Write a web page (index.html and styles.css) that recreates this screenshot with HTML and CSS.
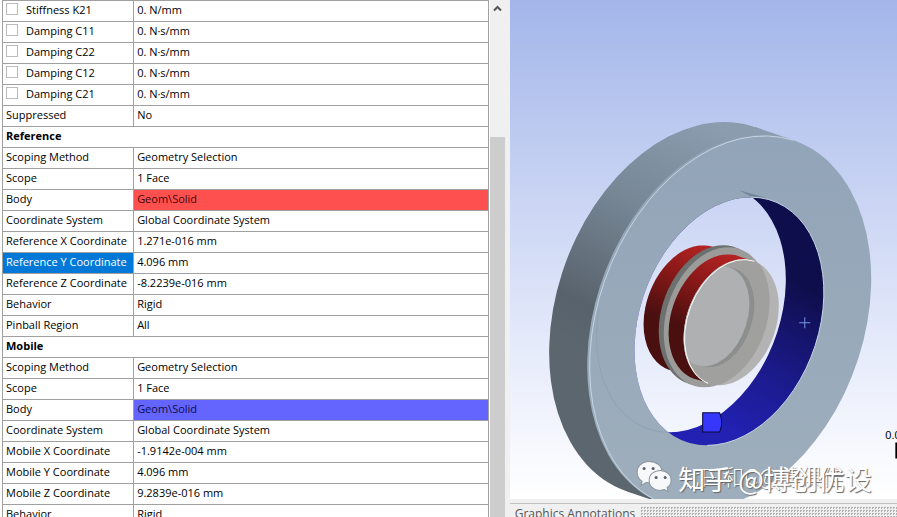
FILE: index.html
```html
<!DOCTYPE html>
<html lang="en">
<head>
<meta charset="UTF-8">
<meta name="viewport" content="width=device-width, initial-scale=1.0">
<title>Bearing details</title>
<link rel="stylesheet" href="styles.css">
</head>
<body>
  <div class="app">
    <section class="details">
      <table class="props">
        <colgroup>
          <col class="name-col">
          <col>
        </colgroup>
        <tbody>
          <tr><td><input type="checkbox" id="k21"><label for="k21">Stiffness K21</label></td><td>0. N/mm</td></tr>
          <tr><td><input type="checkbox" id="c11"><label for="c11">Damping C11</label></td><td>0. N·s/mm</td></tr>
          <tr><td><input type="checkbox" id="c22"><label for="c22">Damping C22</label></td><td>0. N·s/mm</td></tr>
          <tr><td><input type="checkbox" id="c12"><label for="c12">Damping C12</label></td><td>0. N·s/mm</td></tr>
          <tr><td><input type="checkbox" id="c21"><label for="c21">Damping C21</label></td><td>0. N·s/mm</td></tr>
          <tr><td>Suppressed</td><td>No</td></tr>
        </tbody>
        <tbody>
          <tr><th colspan="2">Reference</th></tr>
          <tr><td>Scoping Method</td><td>Geometry Selection</td></tr>
          <tr><td>Scope</td><td>1 Face</td></tr>
          <tr><td>Body</td><td class="body-red">Geom\Solid</td></tr>
          <tr><td>Coordinate System</td><td>Global Coordinate System</td></tr>
          <tr><td>Reference X Coordinate</td><td>1.271e-016 mm</td></tr>
          <tr><td class="selected">Reference Y Coordinate</td><td>4.096 mm</td></tr>
          <tr><td>Reference Z Coordinate</td><td>-8.2239e-016 mm</td></tr>
          <tr><td>Behavior</td><td>Rigid</td></tr>
          <tr><td>Pinball Region</td><td>All</td></tr>
        </tbody>
        <tbody>
          <tr><th colspan="2">Mobile</th></tr>
          <tr><td>Scoping Method</td><td>Geometry Selection</td></tr>
          <tr><td>Scope</td><td>1 Face</td></tr>
          <tr><td>Body</td><td class="body-blue">Geom\Solid</td></tr>
          <tr><td>Coordinate System</td><td>Global Coordinate System</td></tr>
          <tr><td>Mobile X Coordinate</td><td>-1.9142e-004 mm</td></tr>
          <tr><td>Mobile Y Coordinate</td><td>4.096 mm</td></tr>
          <tr><td>Mobile Z Coordinate</td><td>9.2839e-016 mm</td></tr>
          <tr><td>Behavior</td><td>Rigid</td></tr>
        </tbody>
      </table>
      <div class="scrollbar">
        <button class="scroll-up" aria-label="Scroll up">
          <svg width="9" height="7" viewBox="0 0 9 7"><path d="M1 5.5 4.500 2 8 5.500" fill="none" stroke="#555" stroke-width="2"/></svg>
        </button>
        <div class="thumb"></div>
      </div>
    </section>

    <section class="graphics">
      <div class="stage">
        <svg class="model" viewBox="510 0 387 499" preserveAspectRatio="xMinYMin slice">
          <defs>
            <linearGradient id="side" gradientUnits="userSpaceOnUse" x1="700" y1="120" x2="590" y2="350">
              <stop offset="0" stop-color="#8a9cae"/>
              <stop offset="0.4" stop-color="#778796"/>
              <stop offset="0.85" stop-color="#58626c"/>
              <stop offset="1" stop-color="#5c666f"/>
            </linearGradient>
            <linearGradient id="face" gradientUnits="userSpaceOnUse" x1="0" y1="135" x2="0" y2="499">
              <stop offset="0" stop-color="#92a4b8"/>
              <stop offset="1" stop-color="#9eaebc"/>
            </linearGradient>
            <linearGradient id="bore" gradientUnits="userSpaceOnUse" x1="810" y1="290" x2="730" y2="430">
              <stop offset="0" stop-color="#0f0e4c"/>
              <stop offset="0.55" stop-color="#1b1a8a"/>
              <stop offset="1" stop-color="#2221b2"/>
            </linearGradient>
            <linearGradient id="red" gradientUnits="userSpaceOnUse" x1="710" y1="248" x2="680" y2="325">
              <stop offset="0" stop-color="#b42323"/>
              <stop offset="0.4" stop-color="#8c1919"/>
              <stop offset="1" stop-color="#4a0f0f"/>
            </linearGradient>
            <clipPath id="backDisc"><circle r="1" transform="matrix(138 0 -33 187 691 309)"/></clipPath>
            <clipPath id="frontDisc"><circle r="1" transform="matrix(138 0 -33 187 729 322)"/></clipPath>
            <clipPath id="frontHole"><circle r="1" transform="matrix(92 0 -22 124 729 321)"/></clipPath>
            <clipPath id="backHole"><circle r="1" transform="matrix(92 0 -22 124 691 308)"/></clipPath>
            <clipPath id="shaftFace"><circle r="1" transform="matrix(46 0 -12 63 731 322)"/></clipPath>
            <clipPath id="rearRed">
              <circle r="1" transform="matrix(46 0 -12 63 691 308)"/>
              <path d="M713 247 733 254 689 376 669 369z"/>
            </clipPath>
            <clipPath id="frontRed">
              <circle r="1" transform="matrix(46 0 -12 63 716 317)"/>
              <path d="M738 256 754 261 709 383 694 378z"/>
            </clipPath>
            <mask id="through" maskUnits="userSpaceOnUse" x="510" y="0" width="387" height="520">
              <rect x="510" width="387" height="520" fill="#fff"/>
              <g clip-path="url(#frontHole)"><rect x="510" width="387" height="520" fill="#000" clip-path="url(#backHole)"/></g>
            </mask>
          </defs>

          <!-- housing ring -->
          <g mask="url(#through)">
            <path d="M793 140 665 504 627 491 755 127z" fill="url(#side)"/>
            <rect x="510" width="387" height="520" fill="url(#side)" clip-path="url(#backDisc)"/>
            <rect x="510" width="387" height="520" fill="url(#face)" clip-path="url(#frontDisc)"/>
            <path d="M.23 -.973A1 1 0 0 0 -.23 .973" transform="matrix(138 0 -33 187 729 322)" class="edge"/>
            <path d="M-1 0A1 1 0 0 0 .25 .968" transform="matrix(92 0 -22 124 691 308)" class="hidden-edge"/>
            <path d="M739 190 767 198 752 197z" fill="#74869a"/>
            <rect x="510" width="387" height="520" fill="url(#bore)" clip-path="url(#frontHole)"/>
            <path d="M0 -1A1 1 0 0 1 0 1" transform="matrix(92 0 -22 124 729 321)" class="edge"/>
          </g>

          <!-- shaft -->
          <rect x="640" y="240" width="100" height="150" fill="url(#red)" clip-path="url(#rearRed)"/>
          <circle r="1" transform="matrix(51 0 -12 70 711 315)" fill="#6c706f"/>
          <circle r="1" transform="matrix(51 0 -12 70 716 317)" fill="#9b9b99"/>
          <rect x="660" y="250" width="110" height="140" fill="url(#red)" clip-path="url(#frontRed)"/>
          <circle r="1" transform="matrix(46 0 -12 63 731 322)" fill="#b3b3b4"/>
          <g clip-path="url(#shaftFace)">
            <circle r="1" transform="matrix(51 0 -12 70 717 317)" fill="#a0a09f"/>
            <circle r="1" transform="matrix(35 0 -9 50 718 317)" fill="#8d8e8e"/>
            <circle r="1" transform="matrix(35 0 -9 50 713 316)" fill="#afb0b2"/>
          </g>
          <path d="M.25 -.968A1 1 0 0 0 -.25 .968" transform="matrix(46 0 -12 63 731 322)" class="rim"/>

          <path d="M702.500 412.500h17q4 10 0 19h-17z" fill="#3737fb" stroke="#08083c"/>
          <path d="M799 322.500h11M804.500 317v11" stroke="#7c91e6"/>
          <text x="885" y="439" class="scale">0.00</text>
          <path d="M895 442h10v16h-10z"/>

          <!-- account stamps -->
          <g class="chat">
            <path d="M649 461c-7 0-12 5-12 11 0 4 2 7 5 9l-1 4 5-3c10 2 16-4 16-10 0-7-6-11-13-11z"/>
            <path d="M660 470c-6 0-11 4-11 10s5 10 11 10l4-1 4 2-1-4c3-2 4-4 4-7 0-6-5-10-11-10z"/>
            <g class="eyes"><circle cx="644" cy="468" r="1.500"/><circle cx="653" cy="468" r="1.500"/><circle cx="656" cy="477" r="1.500"/><circle cx="665" cy="477" r="1.500"/></g>
          </g>
          <text x="678" y="485" class="stamp thin">七曰和C@博俱佳</text>
          <text x="678" y="490" class="stamp">知乎 @博创优设</text>
        </svg>
      </div>
      <header class="annotations">Graphics Annotations</header>
    </section>
  </div>
</body>
</html>
```
FILE: styles.css
```css
* {
  box-sizing: border-box;
}
body {
  margin: 0;
  font-family: "Open Sans", "Noto Sans CJK SC", sans-serif;
  font-size: 11px;
  color: #000;
  background: #f0f0f0;
}
.app {
  display: grid;
  grid-template-columns: 25fr 19fr;
  grid-template-rows: minmax(0, 1fr);
  height: 100vh;
  overflow: hidden;
}
.details {
  display: flex;
  min-width: 0;
  padding: 0 5px 0 2px;
  background: linear-gradient(#fff, #fff) no-repeat 0 0 / calc(100% - 20px) 100%, #f0f0f0;
}
.props {
  flex: 1;
  align-self: flex-start;
  width: 100%;
  table-layout: fixed;
  border-collapse: collapse;
  margin-right: 1px;
}
.name-col {
  width: 27%;
}
.props td,
.props th {
  height: 21px;
  padding: 0 3px 2px;
  border: 1px solid #a0a0a0;
  line-height: 18px;
  text-align: left;
  white-space: nowrap;
}
.props .selected {
  background: #0078d7;
  color: #fff;
}
.props .body-red {
  background: #ff5050;
  color: #400808;
}
.props .body-blue {
  background: #6464ff;
  color: #0c0c40;
}
input[type="checkbox"] {
  appearance: none;
  width: 12px;
  height: 12px;
  margin: 0 8px 0 0;
  border: 1px solid #bbb;
  background: #fff;
  vertical-align: -1px;
}
.scrollbar {
  display: flex;
  flex-direction: column;
  flex: 0 0 15px;
  background: #f0f0f0;
}
.scroll-up {
  flex: 0 0 137px;
  display: flex;
  justify-content: center;
  align-items: flex-start;
  padding: 5px 0;
  border: 0;
  background: none;
}
.thumb {
  flex: 1;
  background: #cdcdcd;
}
.graphics {
  display: flex;
  flex-direction: column;
  min-width: 0;
  min-height: 0;
}
.stage {
  flex: 1;
  min-height: 0;
  background: linear-gradient(#a3b6ea, #ccd6f4 42%, #e6ebfb 70%, #fff);
}
.model {
  display: block;
  width: 100%;
  height: 100%;
}
.edge,
.rim,
.hidden-edge {
  fill: none;
  stroke: #c6d5e4;
  vector-effect: non-scaling-stroke;
}
.rim {
  stroke: #fff;
}
.hidden-edge {
  stroke: #90a2b3;
}
.scale {
  font: 11px "Liberation Sans", sans-serif;
}
.chat {
  fill: #f7f8fa;
  stroke: #8a949e;
}
.eyes {
  fill: #555f6a;
  stroke: none;
}
.stamp {
  font: 400 27px "Noto Sans CJK SC", sans-serif;
  fill: #fff;
  text-shadow: 1px 1px 1px #666;
}
.thin {
  font-size: 22px;
  font-weight: 300;
}
.annotations {
  display: flex;
  align-items: flex-start;
  gap: 5px;
  flex: none;
  height: 18px;
  padding: 6px 0 0 5px;
  color: #555;
  font-size: 12px;
  line-height: 18px;
  white-space: nowrap;
  background: linear-gradient(#c0c0c0, #c0c0c0) no-repeat 0 4px / 100% 1px, #f0f0f0;
}
.annotations::after {
  content: "";
  flex: 1;
  height: 12px;
  margin-top: 2px;
  background: conic-gradient(#b0b0b0 25%, transparent 0) 0 0 / 3px 3px;
}
```
